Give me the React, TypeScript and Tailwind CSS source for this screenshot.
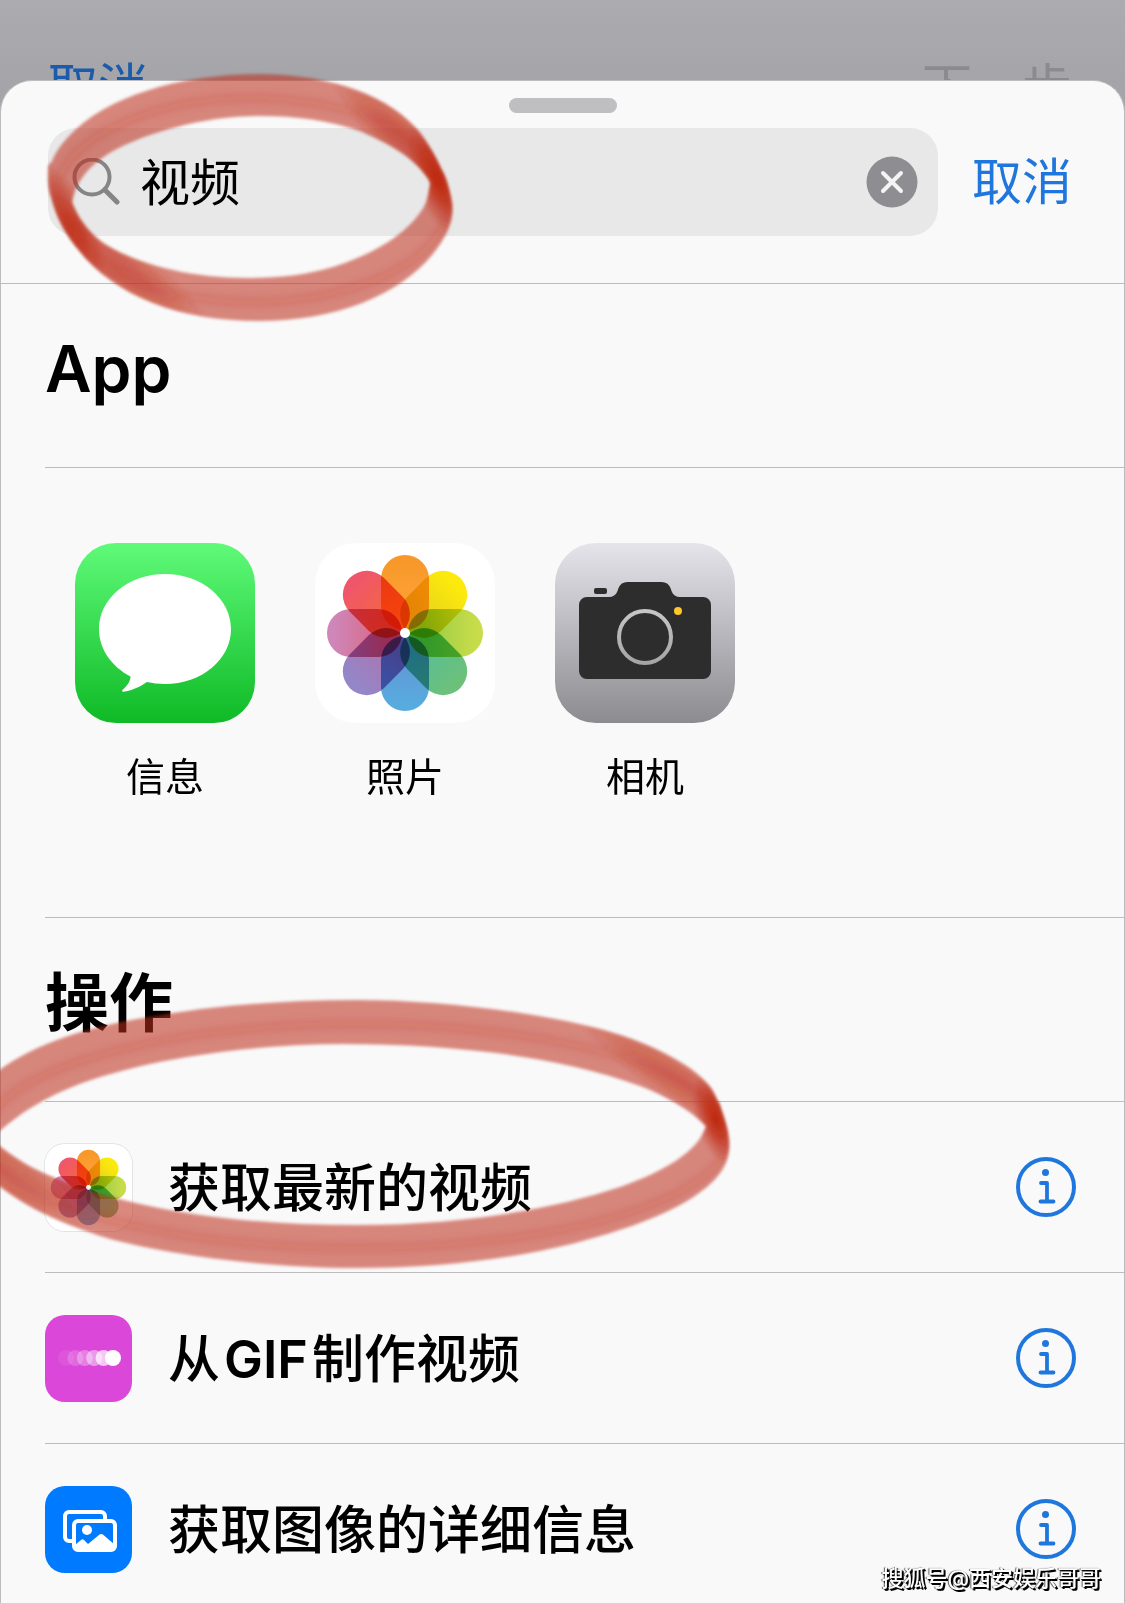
import type { ReactNode } from "react";

interface AppEntry {
  name: string;
  icon: ReactNode;
}

interface ActionEntry {
  title: ReactNode;
  label: string;
  icon: ReactNode;
}

const PETALS = [
  { angle: 0, from: "#f8982b", to: "#ffa436" },
  { angle: 45, from: "#fdea0c", to: "#e4d01c" },
  { angle: 90, from: "#c8dc4a", to: "#94cc44" },
  { angle: 135, from: "#6cc07a", to: "#54be9c" },
  { angle: 180, from: "#58abde", to: "#6494d4" },
  { angle: 225, from: "#9486c8", to: "#b072ac" },
  { angle: 270, from: "#cf86b8", to: "#dc6480" },
  { angle: 315, from: "#f0566a", to: "#f4683c" },
];

function PhotosIcon({ id, className }: { id: string; className: string }) {
  return (
    <svg viewBox="0 0 180 180" className={className} aria-hidden="true">
      <defs>
        {PETALS.map((petal) => (
          <linearGradient
            key={petal.angle}
            id={`${id}-${petal.angle}`}
            x1="0"
            y1="0"
            x2="0"
            y2="1"
          >
            <stop offset="0.1" stopColor={petal.from} />
            <stop offset="0.8" stopColor={petal.to} />
          </linearGradient>
        ))}
      </defs>
      <rect width="180" height="180" rx="41" fill="#fff" />
      {PETALS.map((petal) => (
        <rect
          key={petal.angle}
          x="66"
          y="12"
          width="48"
          height="75"
          rx="24"
          fill={`url(#${id}-${petal.angle})`}
          transform={`rotate(${petal.angle} 90 90)`}
          className="mix-blend-multiply"
        />
      ))}
      <circle cx="90" cy="90" r="5" fill="#fff" />
    </svg>
  );
}

function MessagesIcon() {
  return (
    <svg viewBox="0 0 180 180" className="size-[180px]" aria-hidden="true">
      <defs>
        <linearGradient id="messages-bg" x1="0" y1="0" x2="0" y2="1">
          <stop offset="0" stopColor="#5ffa79" />
          <stop offset="1" stopColor="#0fba26" />
        </linearGradient>
      </defs>
      <rect width="180" height="180" rx="41" fill="url(#messages-bg)" />
      <path
        d="M90 31c36.500 0 66 24.500 66 55s-29.500 55-66 55c-6.500 0-12.500-.7-18-2-7 5-15.500 8.700-23.500 9.700-1.500.2-2-1-.8-2 4.500-3.800 7.800-8.500 7.800-13.200C36.500 123.500 24 106 24 86c0-30.500 29.500-55 66-55z"
        fill="#fff"
      />
    </svg>
  );
}

function CameraIcon() {
  return (
    <svg viewBox="0 0 180 180" className="size-[180px]" aria-hidden="true">
      <defs>
        <linearGradient id="camera-bg" x1="0" y1="0" x2="0" y2="1">
          <stop offset="0" stopColor="#e5e4ea" />
          <stop offset="1" stopColor="#8c8b90" />
        </linearGradient>
        <linearGradient id="camera-lens" x1="0" y1="0" x2="0" y2="1">
          <stop offset="0" stopColor="#c6c6c9" />
          <stop offset="1" stopColor="#a5a5a8" />
        </linearGradient>
      </defs>
      <rect width="180" height="180" rx="41" fill="url(#camera-bg)" />
      <rect x="39" y="45" width="13" height="6" rx="2" fill="#2d2d2d" />
      <path
        d="M32 54h22c4 0 7-2 8.500-6l1-3c1.500-4 4.500-6 9-6h34c4.500 0 7.500 2 9 6l1 3c1.500 4 4.500 6 8.500 6h23a8 8 0 0 1 8 8v66a8 8 0 0 1-8 8H32a8 8 0 0 1-8-8V62a8 8 0 0 1 8-8z"
        fill="#2d2d2d"
      />
      <circle cx="90" cy="94" r="26" fill="none" stroke="url(#camera-lens)" strokeWidth="4" />
      <circle cx="123" cy="68" r="4" fill="#ffc72c" />
    </svg>
  );
}

function GifIcon() {
  return (
    <svg viewBox="0 0 87 87" className="size-[87px]" aria-hidden="true">
      <rect width="87" height="87" rx="20" fill="#db47d8" />
      {[0.08, 0.18, 0.3, 0.45, 0.7, 1].map((opacity, i) => (
        <circle key={opacity} cx={21 + i * 9.4} cy="43" r="8" fill="#fff" opacity={opacity} />
      ))}
    </svg>
  );
}

function ImageDetailsIcon() {
  return (
    <svg viewBox="0 0 87 87" className="size-[87px]" aria-hidden="true">
      <rect width="87" height="87" rx="20" fill="#007aff" />
      <path
        d="M28 55h-4a4 4 0 0 1-4-4V30a4 4 0 0 1 4-4h32a4 4 0 0 1 4 4v4"
        fill="none"
        stroke="#fff"
        strokeWidth="4"
      />
      <rect x="29" y="35" width="41" height="29" rx="4" fill="none" stroke="#fff" strokeWidth="4" />
      <circle cx="42" cy="44" r="5" fill="#fff" />
      <path
        d="M30 59l6-5c1-1 2-1 3 0l4 4 11-9c1.500-1.200 3-1.200 4.500 0L70 59v3a3 3 0 0 1-3 3H33a3 3 0 0 1-3-3z"
        fill="#fff"
      />
    </svg>
  );
}

function InfoIcon() {
  return (
    <svg viewBox="0 0 60 60" className="size-[60px]" fill="none" stroke="#1f77dd" aria-hidden="true">
      <circle cx="30" cy="30" r="28" strokeWidth="4" />
      <circle cx="29.500" cy="15.500" r="3.500" fill="#1f77dd" stroke="none" />
      <path
        d="M25 26h6v18M24.500 44.500h13"
        strokeWidth="3.800"
        strokeLinecap="round"
        strokeLinejoin="round"
      />
    </svg>
  );
}

const BRUSH_STROKES = [
  "M60 214C44 190 42 164 69 136C105 97 180 74 258 74C335 74 392 98 420 133C440 160 450 188 452 208C452 222 443 224 440 212C436 198 433 187 428 178C416 160 395 146 362 132C330 120 295 116 260 116C200 116 145 134 113 151C85 167 73 187 71 208C71 216 66 220 60 214Z",
  "M48 168C48 200 60 228 79 250C115 296 180 321 258 321C338 321 400 294 432 255C447 237 453 222 452 205C449 185 443 168 436 164C430 175 431 190 426 203C412 230 380 252 333 267C305 275 280 278 247 278C190 278 135 264 103 243C80 226 70 205 64 174C60 160 49 158 48 168Z",
  "M-20 1087C20 1045 90 1027 143 1018C210 1006 280 1000 357 1000C440 1000 540 1013 600 1029C655 1044 698 1068 712 1090C722 1108 727 1128 729 1145C728 1157 720 1158 716 1148C712 1138 709 1130 706 1126C696 1115 672 1098 640 1086C560 1056 450 1044 343 1044C260 1044 170 1056 107 1075C60 1089 20 1108 -20 1150Z",
  "M-20 1130C10 1156 30 1170 71 1184C150 1213 250 1225 357 1225C470 1225 560 1207 620 1187C665 1171 697 1152 706 1127C708 1112 715 1098 719 1103C723 1116 729 1130 729 1145C729 1167 716 1181 699 1193C670 1216 600 1239 540 1251C480 1263 420 1268 357 1268C260 1268 160 1253 107 1238C60 1223 20 1206 -20 1170Z",
];

// Denser ink where the brush starts and lifts off.
const INK_POOLS = [
  { cx: 70, cy: 222, rx: 66, ry: 22, angle: 62, opacity: 0.8 },
  { cx: 115, cy: 265, rx: 110, ry: 26, angle: 34, opacity: 0.5 },
  { cx: 438, cy: 180, rx: 62, ry: 24, angle: 68, opacity: 1 },
  { cx: 405, cy: 140, rx: 95, ry: 24, angle: 42, opacity: 0.5 },
  { cx: 716, cy: 1120, rx: 48, ry: 20, angle: 72, opacity: 1 },
  { cx: 680, cy: 1082, rx: 120, ry: 22, angle: 33, opacity: 0.4 },
  { cx: 0, cy: 1170, rx: 110, ry: 30, angle: 32, opacity: 0.35 },
];

function MarkerLoops() {
  return (
    <svg
      width="1125"
      height="1603"
      viewBox="0 0 1125 1603"
      className="pointer-events-none absolute top-0 left-0 max-w-none"
      aria-hidden="true"
    >
      <defs>
        <filter id="soft" x="-5%" y="-5%" width="110%" height="110%">
          <feGaussianBlur stdDeviation="1.500" />
        </filter>
        <filter id="softer" x="-10%" y="-10%" width="120%" height="120%">
          <feGaussianBlur stdDeviation="3" />
        </filter>
        <radialGradient id="ink">
          <stop offset="0" stopColor="#be2a12" />
          <stop offset="0.4" stopColor="#be2a12" stopOpacity="0.75" />
          <stop offset="1" stopColor="#be2a12" stopOpacity="0" />
        </radialGradient>
        <clipPath id="brush">
          {BRUSH_STROKES.map((d) => (
            <path key={d} d={d} />
          ))}
        </clipPath>
      </defs>
      <g fill="#be2d1e" opacity="0.560" filter="url(#soft)">
        {BRUSH_STROKES.map((d) => (
          <path key={d} d={d} />
        ))}
      </g>
      <g filter="url(#soft)">
        <g clipPath="url(#brush)">
          {INK_POOLS.map((pool) => (
            <ellipse
              key={`${pool.cx}-${pool.cy}`}
              cx={pool.cx}
              cy={pool.cy}
              rx={pool.rx}
              ry={pool.ry}
              fill="url(#ink)"
              opacity={pool.opacity}
              transform={`rotate(${pool.angle} ${pool.cx} ${pool.cy})`}
            />
          ))}
          <g fill="none" stroke="#be2a20" strokeWidth="9" opacity="0.120" filter="url(#softer)">
            <ellipse cx="252" cy="200" rx="198" ry="102" />
            <ellipse cx="357" cy="1136" rx="372" ry="112" />
          </g>
        </g>
      </g>
    </svg>
  );
}

const APPS: AppEntry[] = [
  { name: "信息", icon: <MessagesIcon /> },
  { name: "照片", icon: <PhotosIcon id="photos-lg" className="size-[180px]" /> },
  { name: "相机", icon: <CameraIcon /> },
];

const ACTIONS: ActionEntry[] = [
  {
    title: "获取最新的视频",
    label: "获取最新的视频",
    icon: (
      <PhotosIcon
        id="photos-sm"
        className="size-[87px] rounded-[20px] bg-white ring-1 ring-[#e4e4e6]"
      />
    ),
  },
  {
    title: (
      <>
        从<span className="mx-1 font-semibold">GIF</span>制作视频
      </>
    ),
    label: "从GIF制作视频",
    icon: <GifIcon />,
  },
  { title: "获取图像的详细信息", label: "获取图像的详细信息", icon: <ImageDetailsIcon /> },
];

function SectionTitle({ children }: { children: ReactNode }) {
  return (
    <h2 className="flex h-[184px] items-center border-b border-[#bcbcbe] pb-3.5 text-[64px] leading-none font-semibold">
      {children}
    </h2>
  );
}

function ActionRow({ action }: { action: ActionEntry }) {
  return (
    <li className="flex h-[171px] items-center border-b border-[#bcbcbe] pr-12">
      {action.icon}
      <span className="ml-9 flex-1 pt-1 text-[52px] leading-none font-medium">{action.title}</span>
      <button type="button" aria-label={`${action.label} 详情`}>
        <InfoIcon />
      </button>
    </li>
  );
}

export default function App() {
  return (
    <div className="relative flex h-screen flex-col overflow-hidden bg-[#a5a5a9] font-['Inter','Noto_Sans_CJK_SC',sans-serif] text-black">
      <header className="flex h-20 shrink-0 items-start justify-between bg-linear-to-b from-[#acacb0] to-[#a5a5a9] pt-[62px] pr-[53px] pl-12 text-[50px] leading-none">
        <button type="button" className="text-[#1a5bab]">
          取消
        </button>
        <button type="button" className="text-[#8b8b8d]">
          下一步
        </button>
      </header>

      <main className="relative flex min-h-0 flex-1 flex-col rounded-t-[32px] border-x border-t border-[#bcbcbe] bg-[#f9f9f9]">
        <div className="mx-auto mt-[17px] h-[15px] w-[108px] shrink-0 rounded-full bg-[#bfbfc1]" />

        <form className="mt-[15px] flex shrink-0 items-center gap-[34px] border-b border-[#bcbcbe] pr-[52px] pb-[47px] pl-[47px]">
          <div className="flex h-[108px] min-w-0 flex-1 items-center rounded-[28px] bg-[#e8e8e8] pr-5 pl-6">
            <svg
              viewBox="0 0 48 48"
              className="size-12 shrink-0"
              fill="none"
              stroke="#858588"
              strokeLinecap="round"
              aria-hidden="true"
            >
              <circle cx="20" cy="19" r="17.500" strokeWidth="4" />
              <path d="M33 32L45 44" strokeWidth="5" />
            </svg>
            <input
              type="text"
              aria-label="搜索"
              defaultValue="视频"
              className="ml-5 h-[72px] min-w-0 flex-1 bg-transparent pt-0.5 text-[50px] outline-none"
            />
            <button type="button" aria-label="清除">
              <svg viewBox="0 0 52 52" className="size-[52px]" aria-hidden="true">
                <circle cx="26" cy="26" r="25.500" fill="#8e8e92" />
                <path
                  d="M17 17L35 35M35 17L17 35"
                  stroke="#f4f4f4"
                  strokeWidth="4"
                  strokeLinecap="round"
                />
              </svg>
            </button>
          </div>
          <button
            type="button"
            className="text-[50px] leading-none whitespace-nowrap text-[#1f77dd]"
          >
            取消
          </button>
        </form>

        <div className="min-h-0 flex-1 overflow-y-auto pl-11 [scrollbar-width:none]">
          <section>
            <SectionTitle>App</SectionTitle>
            <ul className="flex h-[450px] gap-[60px] border-b border-[#bcbcbe] pt-[75px] pl-[30px]">
              {APPS.map((app) => (
                <li key={app.name}>
                  <button type="button" className="flex flex-col items-center gap-[34px]">
                    {app.icon}
                    <span className="text-[39px] leading-none">{app.name}</span>
                  </button>
                </li>
              ))}
            </ul>
          </section>

          <section>
            <SectionTitle>操作</SectionTitle>
            <ul>
              {ACTIONS.map((action) => (
                <ActionRow key={action.label} action={action} />
              ))}
            </ul>
          </section>
        </div>
      </main>

      <MarkerLoops />

      <p className="absolute right-6 bottom-3.5 text-[22px] leading-none font-medium text-white [text-shadow:1px_1px_1px_#000,2px_2px_0_#000,-1px_0_1px_#555]">
        搜狐号@西安娱乐哥哥
      </p>
    </div>
  );
}
